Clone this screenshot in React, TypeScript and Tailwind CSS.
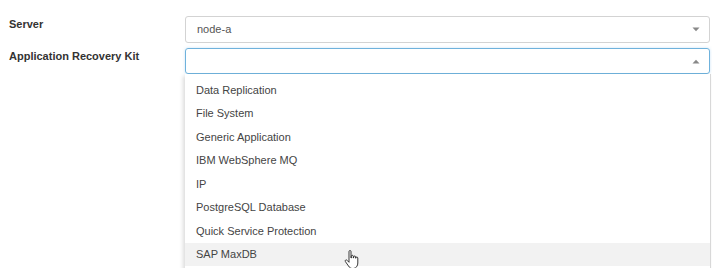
import { useState } from "react";

const KITS = [
  "Data Replication",
  "File System",
  "Generic Application",
  "IBM WebSphere MQ",
  "IP",
  "PostgreSQL Database",
  "Quick Service Protection",
  "SAP MaxDB",
];

function Caret({ up }: { up?: boolean }) {
  return (
    <svg width="8" height="5" viewBox="0 0 8 5" className="shrink-0">
      {up ? (
        <path d="M0.5 4.5 L4 0.8 L7.5 4.5 Z" fill="#888" />
      ) : (
        <path d="M0.5 0.5 L7.5 0.5 L4 4.2 Z" fill="#888" />
      )}
    </svg>
  );
}

function HandCursor() {
  return (
    <svg width="16" height="20" viewBox="0 0 16 20" className="absolute left-[344px] top-[250px]">
      <path
        d="M5 1.5c0-.6.5-1 1-1s1 .4 1 1V8h.3V6.3c0-.6.5-1 1-1s1 .4 1 1V8h.3V7c0-.6.5-1 1-1s1 .4 1 1v1.2h.2V8c0-.6.5-1 1-1s1 .4 1 1v5c0 2.5-1.5 5.5-4.5 5.5H8.5C6.5 18.5 5.6 17.6 4.5 16L1.4 11.6c-.4-.6-.3-1.2.2-1.5.5-.4 1.2-.2 1.6.3L5 12.3Z"
        fill="#fff"
        stroke="#222"
        strokeWidth="0.9"
        strokeLinejoin="round"
      />
    </svg>
  );
}

export default function App() {
  const [hovered, setHovered] = useState("SAP MaxDB");

  return (
    <div className="relative h-[268px] w-[712px] overflow-hidden bg-white pr-[2px] pt-[16px] font-['Liberation_Sans',Arial,sans-serif] text-[11px] text-[#333]">
      <div className="flex">
        <div className="w-[185px] shrink-0 pl-[9px] pt-[1px] text-[11px] leading-[14px] font-bold">Server</div>
        <div className="flex h-[27px] flex-1 items-center justify-between rounded-[3px] border border-[#d3d3d3] pl-[11px] pr-[9px] text-[#555]">
          <span>node-a</span>
          <Caret />
        </div>
      </div>

      <div className="mt-[5px] flex">
        <div className="w-[185px] shrink-0 pl-[9px] pt-[1px] text-[11px] leading-[14px] font-bold">
          Application Recovery Kit
        </div>
        <div className="flex-1">
          <div className="flex h-[26px] items-center justify-end rounded-[3px] border border-[#6fb2dc] pr-[9px] shadow-[0_0_3px_rgba(102,175,233,0.35)]">
            <Caret up />
          </div>
          <div className="mr-[-1px] border-r border-[#d8d8d8] bg-white pt-[4px] shadow-[-2px_2px_4px_rgba(0,0,0,0.14)]">
            {KITS.map((k) => (
              <div
                key={k}
                onMouseEnter={() => setHovered(k)}
                className={`flex h-[23.5px] items-center pl-[11px] text-[#444] ${hovered === k ? "bg-[#f2f2f2]" : ""}`}
              >
                {k}
              </div>
            ))}
            <div className="h-[10px]" />
          </div>
        </div>
      </div>

      <HandCursor />
    </div>
  );
}
